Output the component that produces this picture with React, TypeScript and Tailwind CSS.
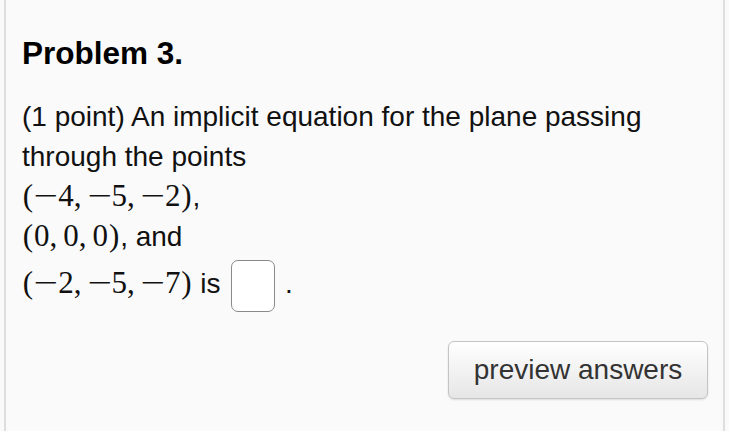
import React from "react";

// one token of a MathJax-like tuple, boxed at TeX glyph widths
const Tok = ({ c }: { c: string }) => {
  if (c === "(" || c === ")")
    return <span className="inline-block w-[0.389em] text-center">{c}</span>;
  if (c === "−")
    return (
      <span className="inline-block w-[0.778em] text-center">
        <span className="inline-block scale-x-[1.4]">{c}</span>
      </span>
    );
  if (c === ",")
    return <span className="inline-block w-[0.278em] mr-[0.167em] text-left">{c}</span>;
  return <span className="inline-block w-[0.5em] text-center">{c}</span>;
};

const Tuple = ({ nums }: { nums: string[] }) => {
  const tokens: string[] = ["("];
  nums.forEach((n, i) => {
    if (n.startsWith("-")) {
      tokens.push("−", n.slice(1));
    } else {
      tokens.push(n);
    }
    if (i < nums.length - 1) tokens.push(",");
  });
  tokens.push(")");
  return (
    <span className="font-['Liberation_Serif',serif] text-[31px] leading-none whitespace-nowrap">
      {tokens.map((t, i) => (
        <Tok key={i} c={t} />
      ))}
    </span>
  );
};

const App: React.FC = () => {
  return (
    <div className="h-[431px] w-[729px] overflow-hidden bg-[#fafafa] font-['Liberation_Sans',Arial,sans-serif]">
      <div className="ml-[4px] h-full w-[721px] border-x-2 border-[#dedede] pl-[16px] pr-[15px] pt-[33px]">
        <h3 className="text-[31.5px] font-bold leading-[40px] text-black">Problem 3.</h3>

        <div className="mt-[24px] text-[28px] leading-[40px] text-[#111]">
          <div>(1 point) An implicit equation for the plane passing</div>
          <div>through the points</div>
          <div>
            <Tuple nums={["-4", "-5", "-2"]} />,
          </div>
          <div>
            <Tuple nums={["0", "0", "0"]} />, and
          </div>
          <div className="mt-[3px]">
            <Tuple nums={["-2", "-5", "-7"]} /> is{" "}
            <input
              type="text"
              aria-label="answer"
              className="ml-[3px] mr-[2px] inline-block h-[52px] w-[44px] rounded-[7px] border-[1.5px] border-[#8a8a8a] bg-white align-middle outline-none"
            />{" "}
            .
          </div>
        </div>

        <div className="mt-[29px] flex justify-end">
          <button className="h-[58px] w-[260px] rounded-[6px] border border-[#c4c4c4] bg-linear-to-b from-white to-[#e6e6e6] text-[28px] text-[#333] shadow-[0_1px_2px_rgba(0,0,0,0.12)]">
            preview answers
          </button>
        </div>
      </div>
    </div>
  );
};

export default App;
